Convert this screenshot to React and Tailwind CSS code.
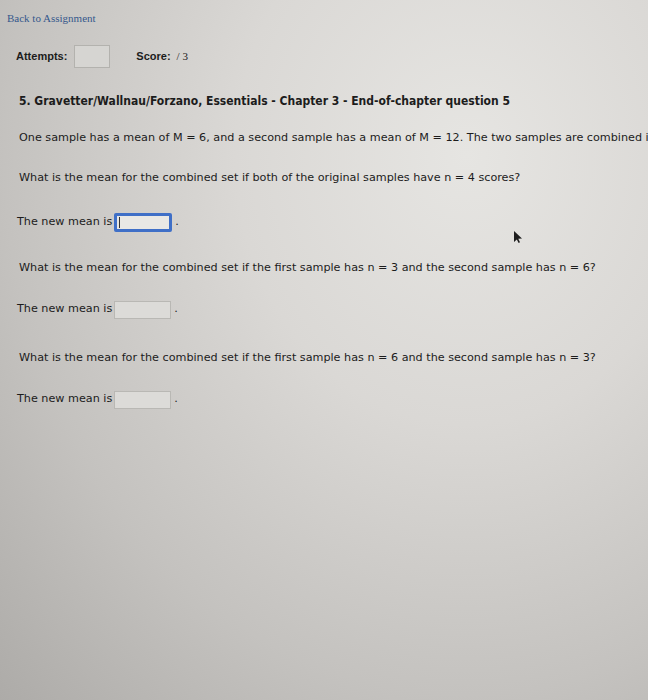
import React from "react";

function AnswerBox({ active }) {
  return (
    <span
      className={
        active
          ? "inline-block w-[58px] h-[19px] border-[3px] border-[#3f6fc7] rounded-[2px] bg-[#e9e8e5] align-middle"
          : "inline-block w-[57px] h-[18px] border border-[#b9b8b4] bg-[#dcdbd8] align-middle"
      }
    >
      {active && <span className="block w-px h-[11px] ml-[2px] mt-[1px] bg-[#333]"></span>}
    </span>
  );
}

function NewMean({ active }) {
  return (
    <div className="flex items-center h-[20px]">
      <span>The new mean is</span>
      <span className="ml-[2px]">
        <AnswerBox active={active} />
      </span>
      <span className="ml-[3px]">.</span>
    </div>
  );
}

export default function App() {
  return (
    <div className="relative w-[648px] h-[700px] overflow-hidden bg-[radial-gradient(ellipse_at_72%_22%,#e6e5e2_0%,#dad8d5_35%,#c4c2bf_70%,#adaba8_100%)] text-[#1c1c1c] font-['DejaVu_Sans',sans-serif] text-[11.2px]">
      <div className="pl-[7px] pt-[10px] font-['Liberation_Serif',serif] text-[11px] text-[#35588c]">
        Back to Assignment
      </div>

      <div className="flex items-center pl-[16px] mt-[18px] h-[24px]">
        <span className="font-bold font-['Liberation_Sans',sans-serif] text-[11px]">Attempts:</span>
        <span className="ml-[7px] w-[36px] h-[23px] border border-[#b3b2ae] bg-[#d6d5d2]"></span>
        <span className="ml-[26px] font-bold font-['Liberation_Sans',sans-serif] text-[11px]">Score:</span>
        <span className="ml-[6px] font-['Liberation_Serif',serif] text-[11px]">/ 3</span>
      </div>

      <div className="pl-[19px] whitespace-nowrap">
        <div className="mt-[23px] font-bold text-[12px] font-['DejaVu_Sans_Condensed','DejaVu_Sans',sans-serif]">
          5. Gravetter/Wallnau/Forzano, Essentials - Chapter 3 - End-of-chapter question 5
        </div>
        <div className="mt-[20px]">
          One sample has a mean of M = 6, and a second sample has a mean of M = 12. The two samples are combined into a single set of scores.
        </div>
        <div className="mt-[24px]">
          What is the mean for the combined set if both of the original samples have n = 4 scores?
        </div>
        <div className="mt-[25px] -ml-[2px]">
          <NewMean active />
        </div>
        <div className="mt-[28px]">
          What is the mean for the combined set if the first sample has n = 3 and the second sample has n = 6?
        </div>
        <div className="mt-[23px] -ml-[2px]">
          <NewMean />
        </div>
        <div className="mt-[30px]">
          What is the mean for the combined set if the first sample has n = 6 and the second sample has n = 3?
        </div>
        <div className="mt-[23px] -ml-[2px]">
          <NewMean />
        </div>
      </div>

      <svg className="absolute left-[513px] top-[230px]" width="10" height="14" viewBox="0 0 10 14">
        <path d="M1 1 L1 12 L3.8 9.4 L5.6 13 L7 12.3 L5.3 8.8 L9 8.6 Z" fill="#1e1e1e" />
      </svg>
    </div>
  );
}
